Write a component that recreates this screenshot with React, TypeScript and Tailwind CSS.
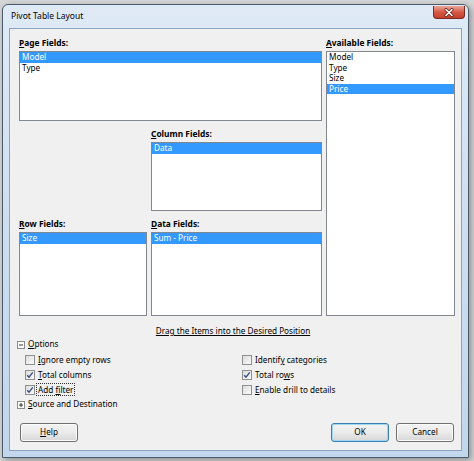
import type { ReactNode } from "react";

const font = { fontFamily: '"Noto Sans", "Liberation Sans", sans-serif' };

function U({ children }: { children: ReactNode }) {
  return <span className="underline underline-offset-[1px]">{children}</span>;
}

function Label({ children, className = "" }: { children: ReactNode; className?: string }) {
  return <div className={"font-bold text-[8.4px] leading-[11px] text-black " + className}>{children}</div>;
}

function ListBox({
  items,
  selected,
  className = "",
}: {
  items: string[];
  selected?: string;
  className?: string;
}) {
  return (
    <div className={"border border-[#828790] bg-white " + className}>
      {items.map((it) => (
        <div
          key={it}
          className={
            "h-[10.5px] pl-[2px] text-[8.2px] leading-[10.5px] " +
            (it === selected ? "bg-[#3399ff] text-white" : "text-black")
          }
        >
          {it}
        </div>
      ))}
    </div>
  );
}

function Check({ checked, children, focus }: { checked?: boolean; children: ReactNode; focus?: boolean }) {
  return (
    <div className="flex h-[15px] items-center">
      <div className="flex h-[10px] w-[10px] items-center justify-center border border-[#8e8f8f] bg-gradient-to-br from-[#dcdcdc] to-[#fbfbfb]">
        {checked && (
          <svg width="8" height="8" viewBox="0 0 8 8">
            <path d="M1.2 4.2 L3 6.2 L6.8 1.4" fill="none" stroke="#3a4d84" strokeWidth="1.4" />
          </svg>
        )}
      </div>
      <span
        className={
          "ml-[2px] px-[1px] text-[8.2px] leading-[11px] text-black " +
          (focus ? "outline outline-1 outline-dotted outline-[#333]" : "")
        }
      >
        {children}
      </span>
    </div>
  );
}

function Expander({ open }: { open: boolean }) {
  return (
    <svg width="8" height="8" viewBox="0 0 8 8">
      <rect x="0.5" y="0.5" width="7" height="7" fill="#fff" stroke="#8c8c8c" />
      <path d="M2 4 H6" stroke="#333" />
      {!open && <path d="M4 2 V6" stroke="#333" />}
    </svg>
  );
}

function Btn({ children, def }: { children: ReactNode; def?: boolean }) {
  return (
    <div
      className={
        "flex h-[19px] w-[58px] items-center justify-center rounded-[3px] border bg-gradient-to-b from-[#f3f3f3] via-[#ebebeb] to-[#d6d6d6] text-[8.2px] text-black " +
        (def ? "border-[#3c7fb1] shadow-[inset_0_0_0_1px_#9fd5f5]" : "border-[#707070] shadow-[inset_0_0_0_1px_#fcfcfc]")
      }
    >
      {children}
    </div>
  );
}

export default function App() {
  return (
    <div className="h-[461px] w-[474px] overflow-hidden bg-[#d4d6d8] pl-[2px] pt-[4px]" style={font}>
      <div className="flex h-[454px] w-[467px] flex-col rounded-t-[6px] border border-[#4c5a6a] bg-gradient-to-b from-[#dfeaf6] via-[#cddef0] to-[#c2d6ec] shadow-[2px_2px_6px_rgba(0,0,0,0.35)]">
        {/* title bar */}
        <div className="flex h-[23px] items-start justify-between">
          <div className="pl-[8px] pt-[5px] text-[8.5px] leading-[12px] text-black">Pivot Table Layout</div>
          <div className="mr-[3px] mt-[1px] flex h-[13px] w-[32px] items-center justify-center rounded-b-[4px] border border-t-0 border-[#7a2a20] bg-gradient-to-b from-[#e9a598] via-[#d65a45] to-[#c4402c]">
            <svg width="10" height="9" viewBox="0 0 10 9">
              <path d="M2 1.5 L8 7.5 M8 1.5 L2 7.5" stroke="#5a1b12" strokeWidth="3" strokeLinecap="round" />
              <path d="M2 1.5 L8 7.5 M8 1.5 L2 7.5" stroke="#ffffff" strokeWidth="1.6" strokeLinecap="round" />
            </svg>
          </div>
        </div>

        {/* client area */}
        <div className="mx-[6px] mb-[6px] flex flex-1 flex-col border border-[#8ba3c1] bg-[#f0f0f0] pl-[9px] pr-[7px] pt-[8px]">
          <div className="grid grid-cols-[128px_171px_129px] grid-rows-[14px_70px_7px_14px_69px_7px_14px_84px] gap-x-[4px]">
            <Label className="col-span-2">
              <U>P</U>age Fields:
            </Label>
            <Label className="col-start-3 row-start-1">
              <U>A</U>vailable Fields:
            </Label>
            <ListBox className="col-span-2 row-start-2" items={["Model", "Type"]} selected="Model" />
            <ListBox
              className="col-start-3 row-span-7 row-start-2"
              items={["Model", "Type", "Size", "Price"]}
              selected="Price"
            />
            <Label className="col-start-2 row-start-4">
              <U>C</U>olumn Fields:
            </Label>
            <ListBox className="col-start-2 row-start-5" items={["Data"]} selected="Data" />
            <Label className="col-start-1 row-start-7">
              <U>R</U>ow Fields:
            </Label>
            <ListBox className="col-start-1 row-start-8" items={["Size"]} selected="Size" />
            <Label className="col-start-2 row-start-7">
              <U>D</U>ata Fields:
            </Label>
            <ListBox className="col-start-2 row-start-8" items={["Sum - Price"]} selected="Sum - Price" />
          </div>

          <div className="-ml-[7px] mt-[9px] h-[12px] text-center text-[8.2px] leading-[12px] text-black underline underline-offset-[1px]">
            Drag the Items into the Desired Position
          </div>

          <div className="-ml-[2px] flex h-[15px] items-center gap-[3px] text-[8.2px] text-black">
            <Expander open />
            <span>
              <U>O</U>ptions
            </span>
          </div>
          <div className="grid grid-cols-[217px_auto] pl-[6px]">
            <Check>
              <U>I</U>gnore empty rows
            </Check>
            <Check>
              Identif<U>y</U> categories
            </Check>
            <Check checked>
              <U>T</U>otal columns
            </Check>
            <Check checked>
              Total ro<U>w</U>s
            </Check>
            <Check checked focus>
              Add <U>f</U>ilter
            </Check>
            <Check>
              <U>E</U>nable drill to details
            </Check>
          </div>
          <div className="-ml-[2px] flex h-[15px] items-center gap-[3px] text-[8.2px] text-black">
            <Expander open={false} />
            <span>
              <U>S</U>ource and Destination
            </span>
          </div>

          <div className="mt-[11px] flex items-center pl-[1px]">
            <Btn>
              <U>H</U>elp
            </Btn>
            <div className="flex-1" />
            <Btn def>OK</Btn>
            <div className="w-[7px]" />
            <Btn>Cancel</Btn>
          </div>
        </div>
      </div>
    </div>
  );
}
